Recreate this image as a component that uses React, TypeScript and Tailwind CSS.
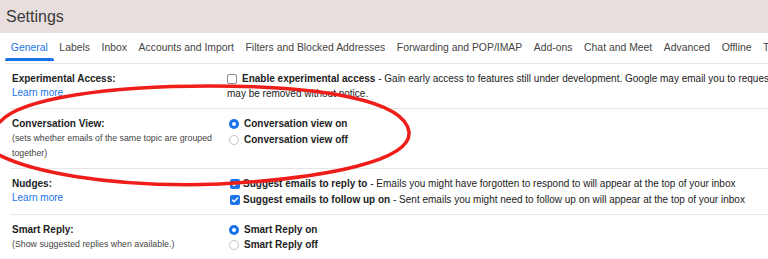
import { Check } from "lucide-react";

const tabs = [
  "General",
  "Labels",
  "Inbox",
  "Accounts and Import",
  "Filters and Blocked Addresses",
  "Forwarding and POP/IMAP",
  "Add-ons",
  "Chat and Meet",
  "Advanced",
  "Offline",
  "Themes",
];

function Checkbox({ checked }: { checked?: boolean }) {
  if (checked) {
    return (
      <span className="flex h-[10px] w-[10px] shrink-0 items-center justify-center rounded-[2px] bg-[#1a73e8]">
        <Check size={8} strokeWidth={4} className="text-white" />
      </span>
    );
  }
  return <span className="h-[10px] w-[10px] shrink-0 rounded-[2px] border border-[#8a8a8a] bg-white" />;
}

function Radio({ checked }: { checked?: boolean }) {
  if (checked) {
    return (
      <span className="flex h-[10px] w-[10px] shrink-0 items-center justify-center rounded-full bg-[#1a73e8]">
        <span className="h-[4px] w-[4px] rounded-full bg-white" />
      </span>
    );
  }
  return <span className="h-[10px] w-[10px] shrink-0 rounded-full border border-[#c4c4c4] bg-white" />;
}

function Row({
  label,
  sub,
  link,
  children,
}: {
  label: string;
  sub?: React.ReactNode;
  link?: boolean;
  children: React.ReactNode;
}) {
  return (
    <div className="flex border-b border-[#e6e6e6] pt-[8px] pb-[7px]">
      <div className="w-[217px] shrink-0 pl-[2px]">
        <div className="text-[10px] font-bold leading-[14px] text-[#222]">{label}</div>
        {link && <div className="text-[10px] leading-[14px] text-[#1a73e8]">Learn more</div>}
        {sub && <div className="whitespace-nowrap text-[8.8px] leading-[15px] text-[#444]">{sub}</div>}
      </div>
      <div className="flex min-w-0 flex-col whitespace-nowrap text-[10px] leading-[14.5px] text-[#222]">
        {children}
      </div>
    </div>
  );
}

export default function App() {
  return (
    <div className="relative h-[259px] w-[768px] overflow-hidden bg-white font-['Liberation_Sans',Arial,sans-serif]">
      <div className="flex h-[33px] items-center bg-[#e7dedd] px-[6px] text-[16px] text-[#3a3a3a]">
        Settings
      </div>

      <div className="ml-[5px] flex h-[31px] items-end border-b border-[#e6e6e6] pb-[2px]">
        {tabs.map((t, i) => (
          <div key={t} className="flex h-full flex-col px-[5.8px]">
            <span
              className={
                "mt-auto whitespace-nowrap text-[10.4px] leading-[14px] " +
                (i === 0 ? "text-[#1a73e8]" : "text-[#444]")
              }
            >
              {t}
            </span>
            <span
              className={
                "mt-[3px] -mx-[5.8px] h-[3px] rounded-t-[2px] " + (i === 0 ? "bg-[#1a73e8]" : "bg-transparent")
              }
            />
          </div>
        ))}
      </div>

      <div className="ml-[10px]">
        <Row label="Experimental Access:" link>
          <div className="flex items-center gap-[5px]">
            <Checkbox />
            <span>
              <b>Enable experimental access</b> - Gain early access to features still under development. Google may
              email you to request feedback on features. Experimental features
            </span>
          </div>
          <div>may be removed without notice.</div>
        </Row>

        <Row
          label="Conversation View:"
          sub={
            <>
              (sets whether emails of the same topic are grouped
              <br />
              together)
            </>
          }
        >
          <div className="flex flex-col gap-[1px] pl-[2px] font-bold">
            <div className="flex items-center gap-[5px]">
              <Radio checked />
              <span>Conversation view on</span>
            </div>
            <div className="flex items-center gap-[5px]">
              <Radio />
              <span>Conversation view off</span>
            </div>
          </div>
        </Row>

        <Row label="Nudges:" link>
          <div className="flex flex-col gap-[1px] pl-[3px]">
            <div className="flex items-center gap-[3px]">
              <Checkbox checked />
              <span>
                <b>Suggest emails to reply to</b> - Emails you might have forgotten to respond to will appear at the
                top of your inbox
              </span>
            </div>
            <div className="flex items-center gap-[3px]">
              <Checkbox checked />
              <span>
                <b>Suggest emails to follow up on</b> - Sent emails you might need to follow up on will appear at the
                top of your inbox
              </span>
            </div>
          </div>
        </Row>

        <Row label="Smart Reply:" sub="(Show suggested replies when available.)">
          <div className="flex flex-col pl-[2px] font-bold">
            <div className="flex items-center gap-[5px]">
              <Radio checked />
              <span>Smart Reply on</span>
            </div>
            <div className="flex items-center gap-[5px]">
              <Radio />
              <span>Smart Reply off</span>
            </div>
          </div>
        </Row>
      </div>

      {/* hand-drawn annotation */}
      <svg className="pointer-events-none absolute inset-0" width="768" height="259" viewBox="0 0 768 259">
        <path
          d="M 0 122 C 20 98, 110 86, 210 86 C 320 86, 405 100, 409 132 C 412 160, 330 178, 220 184 C 110 188, 25 172, -10 150"
          fill="none"
          stroke="#f01e1a"
          strokeWidth="3.5"
          strokeLinecap="round"
        />
      </svg>
    </div>
  );
}
